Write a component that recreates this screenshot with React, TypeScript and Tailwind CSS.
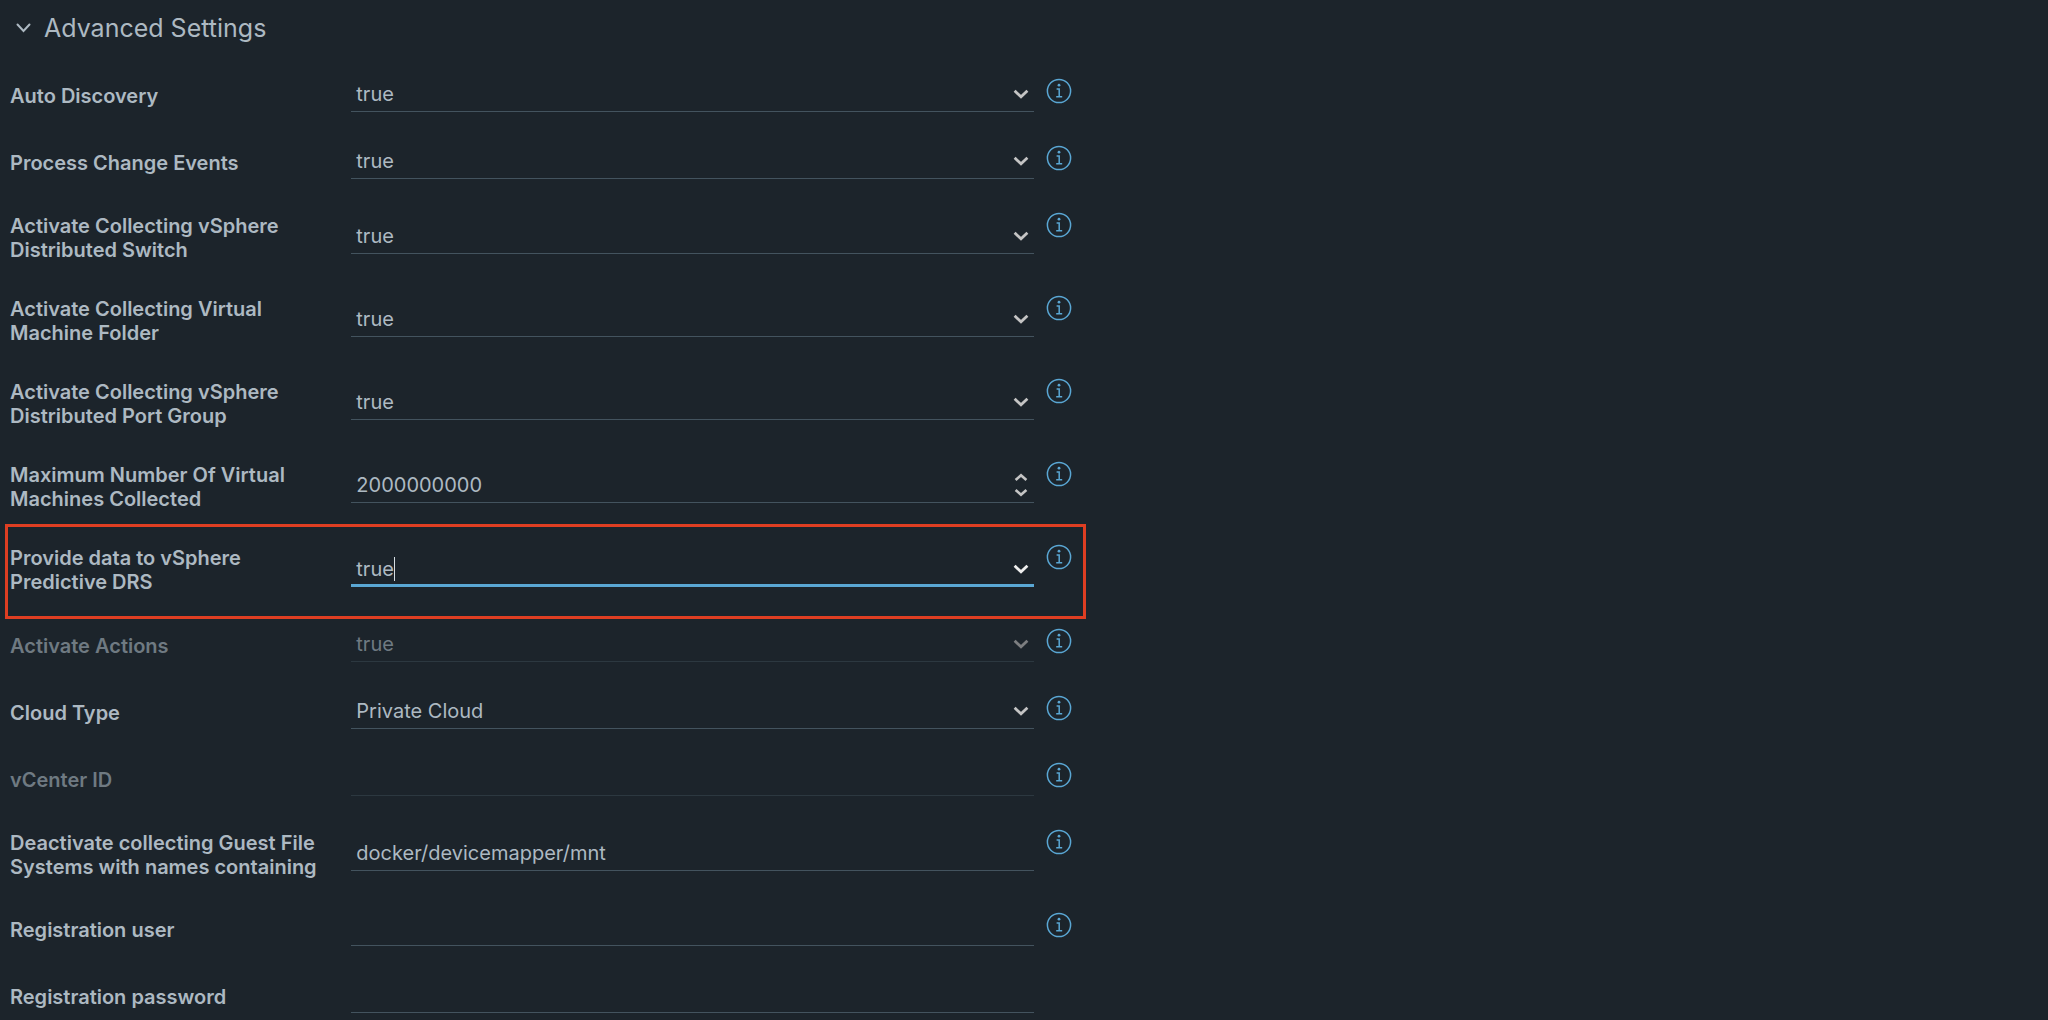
import { useState } from "react";
import clsx from "clsx";

type Field = {
  id: string;
  label: string;
  type: "select" | "combo" | "number" | "text" | "password";
  value?: string;
  options?: string[];
  disabled?: boolean;
  highlighted?: boolean;
  info?: boolean;
};

const booleans = ["true", "false"];

const fields: Field[] = [
  { id: "autoDiscovery", label: "Auto Discovery", type: "select", value: "true", options: booleans, info: true },
  { id: "changeEvents", label: "Process Change Events", type: "select", value: "true", options: booleans, info: true },
  { id: "dvSwitch", label: "Activate Collecting vSphere Distributed Switch", type: "select", value: "true", options: booleans, info: true },
  { id: "vmFolder", label: "Activate Collecting Virtual Machine Folder", type: "select", value: "true", options: booleans, info: true },
  { id: "portGroup", label: "Activate Collecting vSphere Distributed Port Group", type: "select", value: "true", options: booleans, info: true },
  { id: "maxVms", label: "Maximum Number Of Virtual Machines Collected", type: "number", value: "2000000000", info: true },
  { id: "predictiveDrs", label: "Provide data to vSphere Predictive DRS", type: "combo", value: "true", options: booleans, highlighted: true, info: true },
  { id: "actions", label: "Activate Actions", type: "select", value: "true", options: booleans, disabled: true, info: true },
  { id: "cloudType", label: "Cloud Type", type: "select", value: "Private Cloud", options: ["Private Cloud", "VMware Cloud on AWS"], info: true },
  { id: "vcenterId", label: "vCenter ID", type: "text", disabled: true, info: true },
  { id: "guestFs", label: "Deactivate collecting Guest File Systems with names containing", type: "text", value: "docker/devicemapper/mnt", info: true },
  { id: "regUser", label: "Registration user", type: "text", info: true },
  { id: "regPassword", label: "Registration password", type: "password" },
];

function Chevron({ className }: { className?: string }) {
  return (
    <svg viewBox="0 0 16 10" className={clsx("pointer-events-none h-[10px] w-4", className)} fill="none" aria-hidden="true">
      <path d="M1.6 1.8L8 7.8l6.4-6" stroke="currentColor" strokeWidth="2.8" />
    </svg>
  );
}

function SmallChevron({ up }: { up?: boolean }) {
  return (
    <svg viewBox="0 0 14 9" className="h-[9px] w-[14px]" fill="none" aria-hidden="true">
      <path d={up ? "M1.6 7L7 2.2 12.4 7" : "M1.6 2L7 6.8 12.4 2"} stroke="currentColor" strokeWidth="2.6" />
    </svg>
  );
}

function InfoIcon() {
  return (
    <svg viewBox="0 0 26 26" className="size-[26px]" fill="none" stroke="currentColor" aria-hidden="true">
      <circle cx="13" cy="13" r="11.6" strokeWidth="1.5" />
      <circle cx="13" cy="7.2" r="1.4" fill="currentColor" stroke="none" />
      <path d="M10.6 11h2.6v7.8M10.2 18.8h6" strokeWidth="1.5" />
    </svg>
  );
}

function Control({ field }: { field: Field }) {
  const [value, setValue] = useState(field.value ?? "");
  const text = "h-full bg-transparent pl-[5px] text-xl leading-6 outline-none";

  if (field.type === "select") {
    return (
      <>
        <select
          id={field.id}
          value={value}
          disabled={field.disabled}
          onChange={(e) => setValue(e.target.value)}
          className={clsx(text, "w-full appearance-none opacity-100")}
        >
          {field.options?.map((option) => (
            <option key={option} value={option}>
              {option}
            </option>
          ))}
        </select>
        <Chevron className={clsx("-ml-4 shrink-0", field.disabled ? "text-[#7c7e80]" : "text-[#c4c4c4]")} />
      </>
    );
  }

  if (field.type === "combo") {
    return (
      <>
        <input
          id={field.id}
          role="combobox"
          aria-expanded="false"
          value={value}
          onChange={(e) => setValue(e.target.value)}
          className={clsx(text, "field-sizing-content caret-transparent")}
        />
        <span className="h-6 w-px bg-[#d5dde2]" />
        <button type="button" aria-label="Show options" className="ml-auto">
          <Chevron className="text-[#eeeeee]" />
        </button>
      </>
    );
  }

  if (field.type === "number") {
    const step = (by: number) => setValue(String(Number(value) + by));
    return (
      <>
        <input
          id={field.id}
          type="number"
          value={value}
          onChange={(e) => setValue(e.target.value)}
          className={clsx(text, "min-w-0 grow [appearance:textfield] [&::-webkit-inner-spin-button]:appearance-none")}
        />
        <div className="flex flex-col gap-1.5 px-px text-[#c4c4c4]">
          <button type="button" aria-label="Increase" onClick={() => step(1)}>
            <SmallChevron up />
          </button>
          <button type="button" aria-label="Decrease" onClick={() => step(-1)}>
            <SmallChevron />
          </button>
        </div>
      </>
    );
  }

  return (
    <input
      id={field.id}
      type={field.type}
      value={value}
      disabled={field.disabled}
      onChange={(e) => setValue(e.target.value)}
      className={clsx(text, "w-full")}
    />
  );
}

function FieldRow({ field }: { field: Field }) {
  return (
    <div className={clsx("relative flex items-center", field.highlighted ? "mb-9" : "mb-[35px]")}>
      {field.highlighted && (
        <div className="pointer-events-none absolute -top-[22px] -bottom-[25px] left-[5px] w-[calc(50%+57px)] border-[3px] border-[#de3e22]" />
      )}
      <div className={clsx("ml-[10px] w-1/6 shrink-0 pr-6", field.disabled && "text-[#6f7a82]")}>
        <label htmlFor={field.id} className="block text-xl leading-6 font-semibold">
          {field.label}
        </label>
      </div>
      <div
        className={clsx(
          "flex w-1/3 shrink-0 items-center pr-[5px]",
          field.highlighted ? "h-[34px] border-b-[3px] border-[#5aa7d4]" : "h-8 border-b pb-[3px]",
          !field.highlighted && (field.disabled ? "border-[#2c3840] text-[#6f7a82]" : "border-[#43535e]"),
        )}
      >
        <Control field={field} />
      </div>
      {field.info && (
        <button type="button" aria-label={`About ${field.label}`} className="-mt-0.5 ml-3 self-start text-[#5aa7d4]">
          <InfoIcon />
        </button>
      )}
    </div>
  );
}

export default function App() {
  const [open, setOpen] = useState(true);

  return (
    <main className="min-h-screen bg-[#1c242b] font-['Inter',sans-serif] text-[#adb9c2]">
      <h2 className="pt-2.5 pb-[34px]">
        <button
          type="button"
          aria-expanded={open}
          onClick={() => setOpen(!open)}
          className="flex h-9 items-center gap-3 pl-4 text-[25px] leading-8"
        >
          <svg viewBox="0 0 16 10" className={clsx("h-[10px] w-4", !open && "-rotate-90")} fill="none" aria-hidden="true">
            <path d="M1.5 1.5L7.5 8l6-6.5" stroke="currentColor" strokeWidth="2" strokeLinecap="round" />
          </svg>
          Advanced Settings
        </button>
      </h2>
      {open && (
        <form onSubmit={(e) => e.preventDefault()} className="-mb-9">
          {fields.map((field) => (
            <FieldRow key={field.id} field={field} />
          ))}
        </form>
      )}
    </main>
  );
}
